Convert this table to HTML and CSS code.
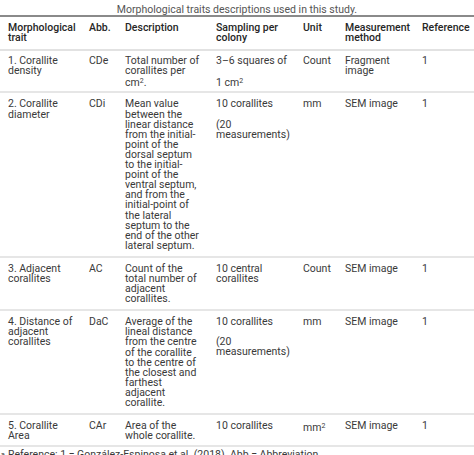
FILE: index.html
```html
<!DOCTYPE html>
<html lang="en">
<head>
<meta charset="utf-8">
<title>Morphological traits</title>
<link rel="stylesheet" href="styles.css">
</head>
<body>
<div class="wrap">
<table class="traits">
<caption>Morphological traits descriptions used in this study.</caption>
<colgroup>
<col class="c1"><col class="c2"><col class="c3"><col class="c4"><col class="c5"><col class="c6"><col class="c7">
</colgroup>
<thead>
<tr>
<th>Morphological trait</th>
<th>Abb.</th>
<th>Description</th>
<th>Sampling per colony</th>
<th>Unit</th>
<th>Measurement method</th>
<th>Reference</th>
</tr>
</thead>
<tbody>
<tr class="first">
<td>1. Corallite density</td>
<td>CDe</td>
<td>Total number of corallites per cm<sup>2</sup>.</td>
<td><p>3–6 squares of</p><p>1 cm<sup>2</sup></p></td>
<td>Count</td>
<td>Fragment image</td>
<td>1</td>
</tr>
<tr>
<td>2. Corallite diameter</td>
<td>CDi</td>
<td>Mean value between the linear distance from the initial-point of the dorsal septum to the initial-point of the ventral septum, and from the initial-point of the lateral septum to the end of the other lateral septum.</td>
<td><p>10 corallites</p><p>(20 measurements)</p></td>
<td>mm</td>
<td>SEM image</td>
<td>1</td>
</tr>
<tr>
<td>3. Adjacent corallites</td>
<td>AC</td>
<td>Count of the total number of adjacent corallites.</td>
<td>10 central corallites</td>
<td>Count</td>
<td>SEM image</td>
<td>1</td>
</tr>
<tr>
<td>4. Distance of adjacent corallites</td>
<td>DaC</td>
<td>Average of the lineal distance from the centre of the corallite to the centre of the closest and farthest adjacent corallite.</td>
<td><p>10 corallites</p><p>(20 measurements)</p></td>
<td>mm</td>
<td>SEM image</td>
<td>1</td>
</tr>
<tr class="last">
<td>5. Corallite Area</td>
<td>CAr</td>
<td>Area of the whole corallite.</td>
<td>10 corallites</td>
<td>mm<sup>2</sup></td>
<td>SEM image</td>
<td>1</td>
</tr>
</tbody>
</table>
<p class="foot"><sup class="mark">a</sup>Reference: 1 = González-Espinosa et al. (2018). Abb = Abbreviation.</p>
</div>
</body>
</html>
```
FILE: styles.css
```css
html, body {
  margin: 0;
  padding: 0;
  background: #fff;
}
body {
  font-family: Roboto, "Liberation Sans", Arial, sans-serif;
  font-size: 10.5px;
  line-height: 10.1px;
  color: #3a3a3a;
  overflow: hidden;
}
.wrap {
  width: 474px;
}
.traits {
  width: 474px;
  border-collapse: collapse;
  table-layout: fixed;
}
.traits caption {
  caption-side: top;
  text-align: center;
  color: #555;
  font-size: 10.5px;
  line-height: 12px;
  padding: 4px 0 0 0;
  height: 11px;
}
.c1 { width: 81px; }
.c2 { width: 36px; }
.c3 { width: 91px; }
.c4 { width: 87px; }
.c5 { width: 42px; }
.c6 { width: 77px; }
.c7 { width: 60px; }
.traits thead tr {
  border-top: 2px solid #8a8a8a;
}
.traits th {
  font-weight: 500;
  color: #262626;
  text-align: left;
  vertical-align: top;
  padding: 6px 8px 6px 8px;
  border-bottom: 2px solid #e2e2e2;
}
.traits td {
  text-align: left;
  vertical-align: top;
  padding: 6px 8px 5px 8px;
  border-bottom: 2px solid #e6e6e6;
}
.traits tr.first td {
  padding-top: 5px;
  padding-bottom: 3px;
}
.traits tr.last td {
  padding-bottom: 4px;
}
.traits td p {
  margin: 0 0 10px 0;
}
.traits td p:last-child {
  margin-bottom: 0;
}
sup {
  font-size: 7px;
  vertical-align: 3px;
}
.foot {
  margin: 0;
  padding: 3px 0 0 0;
  position: relative;
  padding-left: 8px;
  color: #3a3a3a;
}
.foot .mark {
  position: absolute;
  left: 1px;
  top: 3px;
  vertical-align: baseline;
}
```
